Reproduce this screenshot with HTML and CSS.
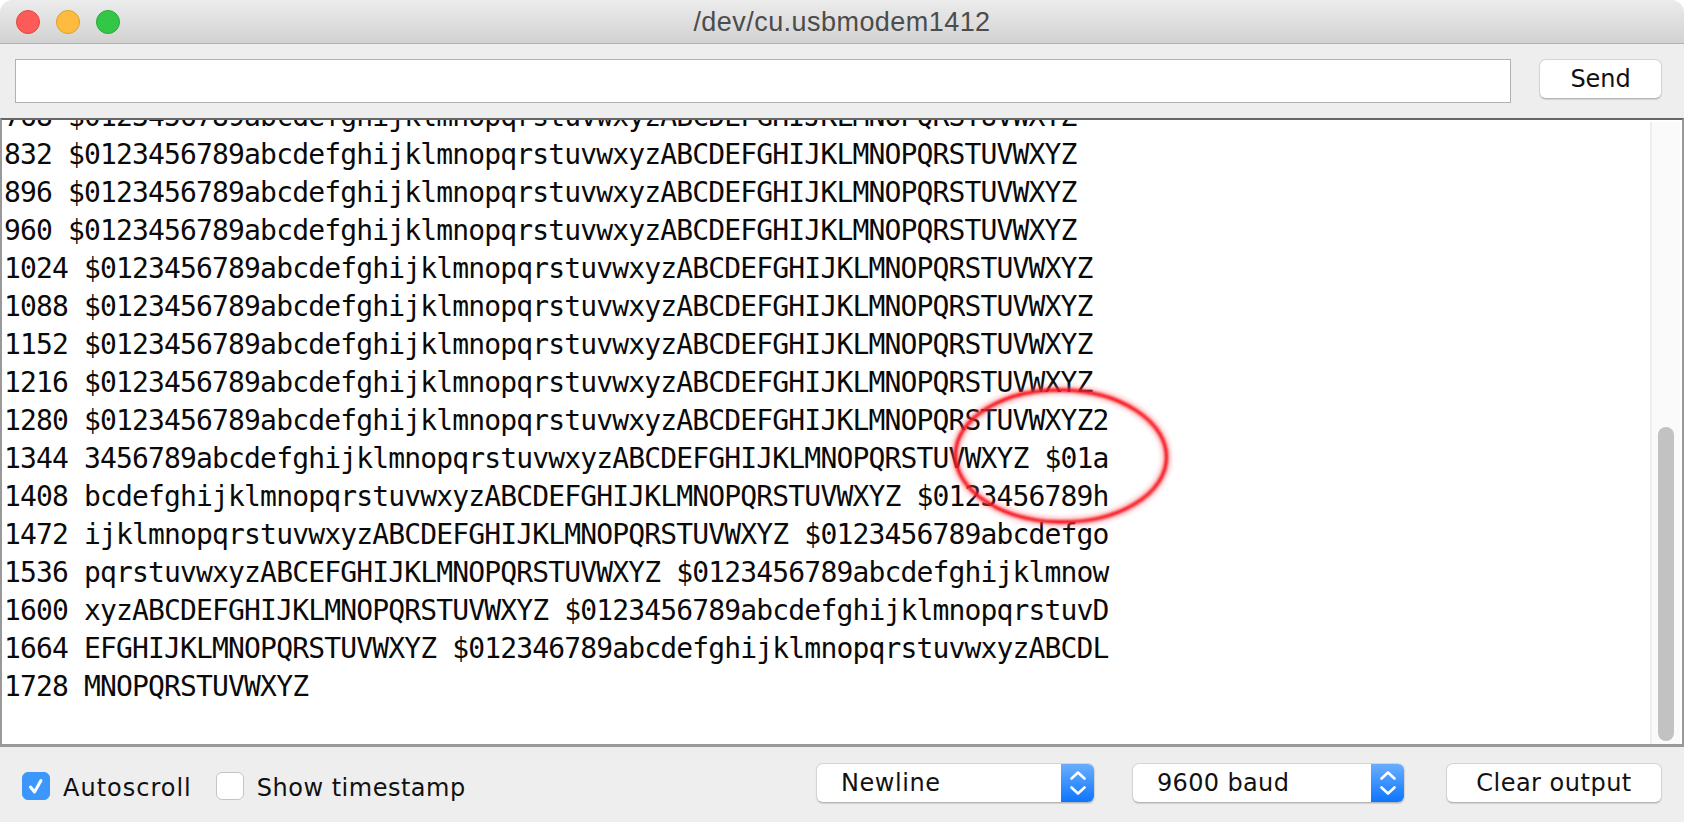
FILE: index.html
```html
<!DOCTYPE html>
<html lang="en">
<head>
<meta charset="utf-8">
<title>/dev/cu.usbmodem1412</title>
<link rel="stylesheet" href="styles.css">
</head>
<body>
<div class="window">
  <header class="titlebar">
    <div class="lights">
      <span class="light red"></span>
      <span class="light yellow"></span>
      <span class="light green"></span>
    </div>
    <div class="title">/dev/cu.usbmodem1412</div>
  </header>
  <div class="sendrow">
    <div class="input"></div>
    <div class="btn send">Send</div>
  </div>
  <main class="monitor">
    <pre class="output">768 $0123456789abcdefghijklmnopqrstuvwxyzABCDEFGHIJKLMNOPQRSTUVWXYZ
832 $0123456789abcdefghijklmnopqrstuvwxyzABCDEFGHIJKLMNOPQRSTUVWXYZ
896 $0123456789abcdefghijklmnopqrstuvwxyzABCDEFGHIJKLMNOPQRSTUVWXYZ
960 $0123456789abcdefghijklmnopqrstuvwxyzABCDEFGHIJKLMNOPQRSTUVWXYZ
1024 $0123456789abcdefghijklmnopqrstuvwxyzABCDEFGHIJKLMNOPQRSTUVWXYZ
1088 $0123456789abcdefghijklmnopqrstuvwxyzABCDEFGHIJKLMNOPQRSTUVWXYZ
1152 $0123456789abcdefghijklmnopqrstuvwxyzABCDEFGHIJKLMNOPQRSTUVWXYZ
1216 $0123456789abcdefghijklmnopqrstuvwxyzABCDEFGHIJKLMNOPQRSTUVWXYZ
1280 $0123456789abcdefghijklmnopqrstuvwxyzABCDEFGHIJKLMNOPQRSTUVWXYZ2
1344 3456789abcdefghijklmnopqrstuvwxyzABCDEFGHIJKLMNOPQRSTUVWXYZ $01a
1408 bcdefghijklmnopqrstuvwxyzABCDEFGHIJKLMNOPQRSTUVWXYZ $0123456789h
1472 ijklmnopqrstuvwxyzABCDEFGHIJKLMNOPQRSTUVWXYZ $0123456789abcdefgo
1536 pqrstuvwxyzABCEFGHIJKLMNOPQRSTUVWXYZ $0123456789abcdefghijklmnow
1600 xyzABCDEFGHIJKLMNOPQRSTUVWXYZ $0123456789abcdefghijklmnopqrstuvD
1664 EFGHIJKLMNOPQRSTUVWXYZ $012346789abcdefghijklmnopqrstuvwxyzABCDL
1728 MNOPQRSTUVWXYZ</pre>
    <div class="scrollbar"><div class="thumb"></div></div>
    <svg class="circle" width="240" height="160" viewBox="0 0 240 160" aria-hidden="true">
      <defs>
        <filter id="glow" x="-10%" y="-10%" width="120%" height="120%"><feGaussianBlur stdDeviation="2.2"/></filter>
        <filter id="soft" x="-10%" y="-10%" width="120%" height="120%"><feGaussianBlur stdDeviation="0.8"/></filter>
      </defs>
      <ellipse class="circle-glow" cx="120" cy="80" rx="105.5" ry="66" filter="url(#glow)"/>
      <ellipse class="circle-core" cx="120" cy="80" rx="105.5" ry="66" filter="url(#soft)"/>
    </svg>
  </main>
  <footer class="bottombar">
    <div class="check-item auto">
      <span class="check on">
        <svg width="18" height="18" viewBox="0 0 18 18" aria-hidden="true"><path class="tick" d="M3.5 10 L7.5 15 L14 3.5"/></svg>
      </span>
      <span class="label">Autoscroll</span>
    </div>
    <div class="check-item stamp">
      <span class="check"></span>
      <span class="label">Show timestamp</span>
    </div>
    <div class="spacer"></div>
    <div class="select newline">
      <span class="select-text">Newline</span>
      <span class="stepper">
        <svg width="18" height="28" viewBox="0 0 18 28" aria-hidden="true"><path class="chev" d="M2.5 9.5 L9 3.5 L15.5 9.5"/><path class="chev" d="M2.5 18.5 L9 24.5 L15.5 18.5"/></svg>
      </span>
    </div>
    <div class="select baud">
      <span class="select-text">9600 baud</span>
      <span class="stepper">
        <svg width="18" height="28" viewBox="0 0 18 28" aria-hidden="true"><path class="chev" d="M2.5 9.5 L9 3.5 L15.5 9.5"/><path class="chev" d="M2.5 18.5 L9 24.5 L15.5 18.5"/></svg>
      </span>
    </div>
    <div class="btn clear">Clear output</div>
  </footer>
</div>
</body>
</html>
```

FILE: styles.css
```css
* { box-sizing: border-box; }
html, body { margin: 0; padding: 0; background: #fff; }
body { width: 1684px; height: 822px; overflow: hidden; }

.window {
  width: 1684px;
  height: 822px;
  display: flex;
  flex-direction: column;
  background: #eeeeee;
  border-radius: 13px 13px 0 0;
  overflow: hidden;
  font-family: "DejaVu Sans", sans-serif;
  color: #111;
}

.titlebar {
  height: 44px;
  flex: none;
  display: flex;
  align-items: center;
  justify-content: center;
  position: relative;
  background: linear-gradient(#ececec, #d2d2d2);
  border-bottom: 1px solid #b1b1b1;
}
.lights {
  position: absolute;
  left: 16px;
  top: 10px;
  display: flex;
  gap: 16px;
}
.light { width: 24px; height: 24px; border-radius: 50%; border: 1px solid; }
.red { background: #fc5b57; border-color: #e14842; }
.yellow { background: #fdbc40; border-color: #dfa023; }
.green { background: #33c748; border-color: #27aa35; }
.title {
  font-family: "Liberation Sans", sans-serif;
  font-size: 27px;
  letter-spacing: .45px;
  color: #4c4c4c;
  line-height: 44px;
}

.sendrow {
  height: 74px;
  flex: none;
  display: flex;
  align-items: flex-start;
  padding: 15px 22px 0 15px;
}
.input {
  width: 1496px;
  height: 44px;
  background: #fff;
  border: 1px solid #b2b2b2;
}
.btn {
  background: #fff;
  border-radius: 7px;
  border: 1px solid #d4d4d4;
  border-bottom-color: #b6b6b6;
  box-shadow: 0 1px 1px rgba(0,0,0,.12);
  display: flex;
  align-items: center;
  justify-content: center;
  font-size: 24px;
}
.send { width: 123px; height: 40px; margin-left: 28px; letter-spacing: -.1px; }

.monitor {
  height: 629px;
  flex: none;
  display: flex;
  position: relative;
  background: #fff;
  border: 2px solid #999;
  border-top-color: #666;
  border-bottom-width: 3px;
  overflow: hidden;
}
.output {
  flex: 1;
  margin: -22px 0 0;
  padding-left: 2px;
  font-family: "DejaVu Sans Mono", monospace;
  font-size: 28px;
  letter-spacing: -.85px;
  line-height: 38px;
  color: #0a0a0a;
}
.scrollbar {
  width: 30px;
  margin: 2px 2px 0 0;
  flex: none;
  display: flex;
  flex-direction: column;
  justify-content: flex-end;
  align-items: center;
  padding: 0 0 3px;
  background: #fafafa;
  border-left: 2px solid #eee;
}
.thumb { width: 16px; height: 314px; border-radius: 8px; background: #c2c2c2; }

.circle { position: absolute; left: 939px; top: 256px; transform: rotate(1deg); }
.circle-glow { fill: none; stroke: #ff5a60; stroke-width: 9; opacity: .4; }
.circle-core { fill: none; stroke: #f5121c; stroke-width: 3.4; }

.bottombar {
  flex: 1;
  display: flex;
  align-items: flex-start;
  padding: 16px 22px 0 22px;
  font-size: 24px;
}
.check-item { display: flex; align-items: center; gap: 13px; height: 46px; }
.auto { margin-right: 24px; }
.check {
  width: 28px;
  height: 28px;
  border-radius: 6px;
  background: #fff;
  border: 1px solid #c4c4c4;
  display: flex;
  align-items: center;
  justify-content: center;
}
.check.on { background: #3b97fb; border-color: #3b97fb; }
.tick { fill: none; stroke: #fff; stroke-width: 3; stroke-linecap: round; stroke-linejoin: round; }
.label { padding-top: 4px; }
.auto .label { letter-spacing: 1px; }
.stamp .label { letter-spacing: .5px; }
.spacer { flex: 1; }
.select {
  height: 40px;
  display: flex;
  align-items: center;
  justify-content: space-between;
  background: #fff;
  border-radius: 7px;
  border: 1px solid #d4d4d4;
  border-bottom-color: #b6b6b6;
  box-shadow: 0 1px 1px rgba(0,0,0,.12);
  overflow: hidden;
  padding-left: 24px;
}
.newline { width: 279px; margin-right: 37px; }
.baud { width: 273px; margin-right: 41px; }
.newline .select-text { letter-spacing: .55px; }
.baud .select-text { letter-spacing: .35px; }
.stepper {
  width: 33px;
  height: 40px;
  flex: none;
  display: flex;
  align-items: center;
  justify-content: center;
  background: linear-gradient(#6cb0fe, #0a74ff);
}
.chev { fill: none; stroke: #fff; stroke-width: 2.6; stroke-linecap: round; stroke-linejoin: round; }
.clear { width: 216px; height: 40px; letter-spacing: .5px; }
```
